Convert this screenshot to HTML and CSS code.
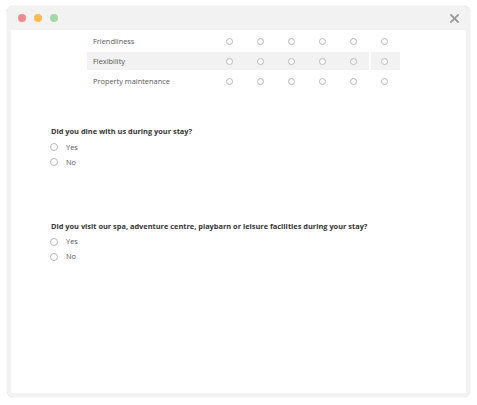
FILE: index.html
```html
<!DOCTYPE html>
<html>
<head>
<meta charset="utf-8">
<link rel="stylesheet" href="styles.css">
</head>
<body>
<div class="window">
  <div class="titlebar">
    <span class="dot red"></span>
    <span class="dot yellow"></span>
    <span class="dot green"></span>
    <span class="close">
      <svg width="9" height="9" viewBox="0 0 9 9"><path d="M1 1L8 8M8 1L1 8" stroke="#9a9a9a" stroke-width="1.8" stroke-linecap="square"/></svg>
    </span>
  </div>
  <div class="content">
    <div class="matrix">
      <div class="mrow">
        <div class="label">Friendliness</div>
        <div class="cell"><span class="radio"></span></div>
        <div class="cell"><span class="radio"></span></div>
        <div class="cell"><span class="radio"></span></div>
        <div class="cell"><span class="radio"></span></div>
        <div class="cell"><span class="radio"></span></div>
        <div class="cell last"><span class="radio"></span></div>
      </div>
      <div class="mrow alt">
        <div class="label">Flexibility</div>
        <div class="cell"><span class="radio"></span></div>
        <div class="cell"><span class="radio"></span></div>
        <div class="cell"><span class="radio"></span></div>
        <div class="cell"><span class="radio"></span></div>
        <div class="cell"><span class="radio"></span></div>
        <div class="cell last"><span class="radio"></span></div>
      </div>
      <div class="mrow">
        <div class="label">Property maintenance</div>
        <div class="cell"><span class="radio"></span></div>
        <div class="cell"><span class="radio"></span></div>
        <div class="cell"><span class="radio"></span></div>
        <div class="cell"><span class="radio"></span></div>
        <div class="cell"><span class="radio"></span></div>
        <div class="cell last"><span class="radio"></span></div>
      </div>
    </div>

    <div class="question q1">
      <div class="qtitle">Did you dine with us during your stay?</div>
      <div class="option"><span class="oradio"></span>Yes</div>
      <div class="option"><span class="oradio"></span>No</div>
    </div>

    <div class="question q2">
      <div class="qtitle">Did you visit our spa, adventure centre, playbarn or leisure facilities during your stay?</div>
      <div class="option"><span class="oradio"></span>Yes</div>
      <div class="option"><span class="oradio"></span>No</div>
    </div>
  </div>
</div>
</body>
</html>
```
FILE: styles.css
```css
* { box-sizing: border-box; }
html, body {
  margin: 0;
  padding: 0;
  background: #ffffff;
}
body {
  font-family: "Open Sans", "Liberation Sans", sans-serif;
  padding: 6px 7px 8px 7px;
}
.window {
  width: 463px;
  height: 391px;
  background: #f2f2f2;
  border-radius: 6px;
  box-shadow: 0 0 1px rgba(0,0,0,0.25);
  padding: 0 4px 4px 4px;
  display: flex;
  flex-direction: column;
}
.titlebar {
  height: 24px;
  display: flex;
  align-items: center;
  padding-left: 7px;
  padding-right: 7px;
  gap: 8px;
}
.dot {
  width: 8px;
  height: 8px;
  border-radius: 50%;
  display: block;
}
.red { background: #ee8a8c; }
.yellow { background: #fcbb4c; }
.green { background: #a5d8a6; }
.close {
  margin-left: auto;
  display: flex;
  align-items: center;
}
.content {
  flex: 1;
  background: #ffffff;
  padding-top: 2px;
}
.matrix {
  margin-left: 76px;
  display: flex;
  flex-direction: column;
  gap: 2px;
}
.mrow {
  display: flex;
  height: 18px;
  align-items: stretch;
}
.label {
  width: 126.5px;
  padding-left: 6px;
  font-size: 7.4px;
  color: #555;
  display: flex;
  align-items: center;
}
.cell {
  width: 31px;
  display: flex;
  align-items: center;
  justify-content: center;
}
.cell.last {
  width: 29px;
  margin-left: 2px;
  padding-right: 1px;
}
.mrow.alt .label, .mrow.alt .cell {
  background: #f2f2f2;
}
.radio {
  width: 7px;
  height: 7px;
  border: 1px solid #b8b8b8;
  border-radius: 50%;
  background: #fff;
  display: block;
}
.question {
  margin-left: 40px;
}
.q1 { margin-top: 34px; }
.q2 { margin-top: 49px; }
.qtitle {
  font-size: 7.4px;
  font-weight: 700;
  color: #333;
  line-height: 14px;
  margin-bottom: 1.5px;
}
.option {
  font-size: 7.4px;
  color: #555;
  line-height: 15px;
  height: 15px;
  display: flex;
  align-items: center;
}
.oradio {
  width: 8px;
  height: 8px;
  border: 1px solid #b8b8b8;
  border-radius: 50%;
  display: block;
  margin-left: -1px;
  margin-right: 8px;
}
```
